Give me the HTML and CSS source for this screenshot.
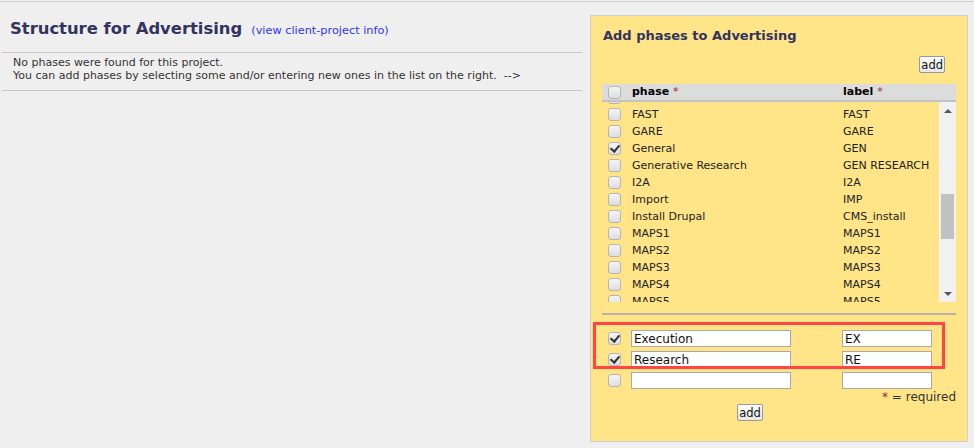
FILE: index.html
```html
<!DOCTYPE html>
<html lang="en">
<head>
    <meta charset="UTF-8">
    <title>Structure for Advertising</title>
    <link rel="stylesheet" href="styles.css">
</head>
<body>
    <div class="page">
        <section class="structure">
            <div class="structure-head">
                <h1>Structure for Advertising</h1>
                <a href="#">(view client-project info)</a>
            </div>
            <div class="structure-body">
                <p>No phases were found for this project.</p>
                <p>You can add phases by selecting some and/or entering new ones in the list on the right. &nbsp;--&gt;</p>
            </div>
        </section>

        <section class="add-panel">
            <h2>Add phases to Advertising</h2>
            <div class="top-actions"><button class="btn">add</button></div>

            <div class="phase-head">
                <span class="cell-cb"><span class="cb"></span></span>
                <span class="cell-phase">phase <span class="req">*</span></span>
                <span class="cell-label">label <span class="req">*</span></span>
            </div>

            <div class="phase-box">
                <div class="phase-list">
                    <div class="phase-rows" id="phaseRows"></div>
                </div>
                <div class="scrollbar">
                    <span class="arrow up"></span>
                    <div class="track"><div class="thumb"></div></div>
                    <span class="arrow down"></span>
                </div>
            </div>

            <hr class="sep">

            <div class="new-rows">
                <div class="new-row">
                    <span class="cell-cb"><span class="cb checked"></span></span>
                    <span class="cell-phase"><input class="txt phase-input" type="text" value="Execution"></span>
                    <span class="cell-label"><input class="txt label-input" type="text" value="EX"></span>
                </div>
                <div class="new-row">
                    <span class="cell-cb"><span class="cb checked"></span></span>
                    <span class="cell-phase"><input class="txt phase-input" type="text" value="Research"></span>
                    <span class="cell-label"><input class="txt label-input" type="text" value="RE"></span>
                </div>
                <div class="new-row">
                    <span class="cell-cb"><span class="cb"></span></span>
                    <span class="cell-phase"><input class="txt phase-input" type="text" value=""></span>
                    <span class="cell-label"><input class="txt label-input" type="text" value=""></span>
                </div>
                <div class="highlight"></div>
            </div>

            <p class="required"><span class="req">*</span> = required</p>
            <div class="bottom-actions"><button class="btn">add</button></div>
        </section>
    </div>

    <script>
        // existing phases (first one is scrolled mostly out of view)
        const phases = [
            ["", "", false],
            ["FAST", "FAST", false],
            ["GARE", "GARE", false],
            ["General", "GEN", true],
            ["Generative Research", "GEN RESEARCH", false],
            ["I2A", "I2A", false],
            ["Import", "IMP", false],
            ["Install Drupal", "CMS_install", false],
            ["MAPS1", "MAPS1", false],
            ["MAPS2", "MAPS2", false],
            ["MAPS3", "MAPS3", false],
            ["MAPS4", "MAPS4", false],
            ["MAPS5", "MAPS5", false]
        ];

        const rows = document.getElementById('phaseRows');
        phases.forEach(p => {
            const row = document.createElement('div');
            row.className = 'phase-row';
            row.innerHTML = `
                <span class="cell-cb"><span class="cb${p[2] ? ' checked' : ''}"></span></span>
                <span class="cell-phase">${p[0]}</span>
                <span class="cell-label">${p[1]}</span>
            `;
            rows.appendChild(row);
        });
    </script>
</body>
</html>
```

FILE: styles.css
```css
* {
    margin: 0;
    padding: 0;
    box-sizing: border-box;
}

body {
    background: #efefef;
    font-family: 'DejaVu Sans', Verdana, sans-serif;
    font-size: 11px;
    color: #333;
    padding-top: 1px;
}

.page {
    display: flex;
    align-items: flex-start;
    border-top: 1px solid #cfcfcf;
    height: 447px;
}

/* left side */
.structure {
    width: 580px;
    margin-left: 2px;
}

.structure-head {
    display: flex;
    align-items: baseline;
    gap: 9px;
    padding: 17px 0 0 8px;
    height: 51px;
    border-bottom: 1px solid #c8c8c8;
}

.structure-head h1 {
    font-size: 16.4px;
    color: #333360;
    font-weight: bold;
}

.structure-head a {
    font-size: 11.3px;
    color: #3333ee;
    text-decoration: none;
}

.structure-body {
    padding: 3px 0 0 11px;
    height: 38px;
    border-bottom: 1px solid #c8c8c8;
}

.structure-body p {
    line-height: 13px;
}

/* right panel */
.add-panel {
    width: 378px;
    margin: 13px 0 0 8px;
    height: 427px;
    background: #ffe588;
    border: 1px solid #cfcfcf;
    padding: 0 11px;
}

.add-panel h2 {
    font-size: 13px;
    color: #333360;
    padding: 12px 0 0 1px;
    height: 40px;
}

.top-actions {
    display: flex;
    justify-content: flex-end;
    padding-right: 11px;
    height: 28px;
}

.btn {
    font-family: 'DejaVu Sans', Verdana, sans-serif;
    font-size: 11.5px;
    color: #111;
    height: 17px;
    padding: 0 1px;
    line-height: 14px;
    border: 1px solid #999;
    border-radius: 2px;
    background: linear-gradient(#fdfdfd, #e6e6e6);
}

.cell-cb {
    width: 26px;
    display: flex;
    justify-content: center;
    padding-right: 1px;
}

.cell-phase {
    width: 215px;
    padding-left: 4px;
}

.cell-label {
    flex: 1;
}

.phase-head {
    display: flex;
    align-items: center;
    height: 18px;
    line-height: 14px;
    background-color: #dcdcdc;
    background-image: radial-gradient(#c9c9c9 0.6px, transparent 0.8px);
    background-size: 6px 4px;
    border-bottom: 2px solid #c2c2c2;
    font-weight: bold;
    color: #000;
}

.req {
    color: #a02828;
    font-weight: normal;
}

.phase-box {
    display: flex;
    height: 200px;
}

.phase-list {
    flex: 1;
    overflow: hidden;
}

.phase-rows {
    margin-top: -13px;
}

.phase-row {
    display: flex;
    align-items: center;
    height: 17px;
    line-height: 14px;
    color: #222;
}

.cb {
    display: inline-block;
    width: 13px;
    height: 13px;
    border: 1px solid #b5b5b5;
    border-radius: 3px;
    background: linear-gradient(#f4f4f4, #dedede);
    position: relative;
}

.cb.checked::after {
    content: "";
    position: absolute;
    left: 3px;
    top: 0px;
    width: 4px;
    height: 7px;
    border: solid #333;
    border-width: 0 2px 2px 0;
    transform: rotate(40deg);
}

.scrollbar {
    width: 17px;
    background: #f1f1f1;
    display: flex;
    flex-direction: column;
}

.arrow {
    height: 17px;
    display: flex;
    justify-content: center;
    align-items: center;
}

.arrow::before {
    content: "";
    border-left: 4px solid transparent;
    border-right: 4px solid transparent;
}

.arrow.up::before {
    border-bottom: 4px solid #555;
}

.arrow.down::before {
    border-top: 4px solid #555;
}

.track {
    flex: 1;
    padding: 75px 2px 0;
}

.thumb {
    height: 45px;
    background: #c1c1c1;
}

.sep {
    border: none;
    border-top: 2px solid #b3b3b3;
    margin: 11px 0 13px;
}

.new-rows {
    position: relative;
}

.new-row {
    display: flex;
    align-items: center;
    height: 21px;
}

.txt {
    font-family: 'DejaVu Sans', Verdana, sans-serif;
    font-size: 12px;
    color: #111;
    height: 17px;
    border: 1px solid #a9a9a9;
    background: #fff;
    padding: 0 2px;
}

.phase-input {
    width: 160px;
    margin-left: -1px;
}

.label-input {
    width: 90px;
    margin-left: -1px;
}

.highlight {
    position: absolute;
    left: -9px;
    top: -6px;
    width: 352px;
    height: 47px;
    border: 3px solid #ff4545;
    pointer-events: none;
}

.required {
    text-align: right;
    font-size: 12px;
    line-height: 13px;
    margin-top: 0;
}

.bottom-actions {
    display: flex;
    justify-content: center;
    padding-right: 58px;
}
```
